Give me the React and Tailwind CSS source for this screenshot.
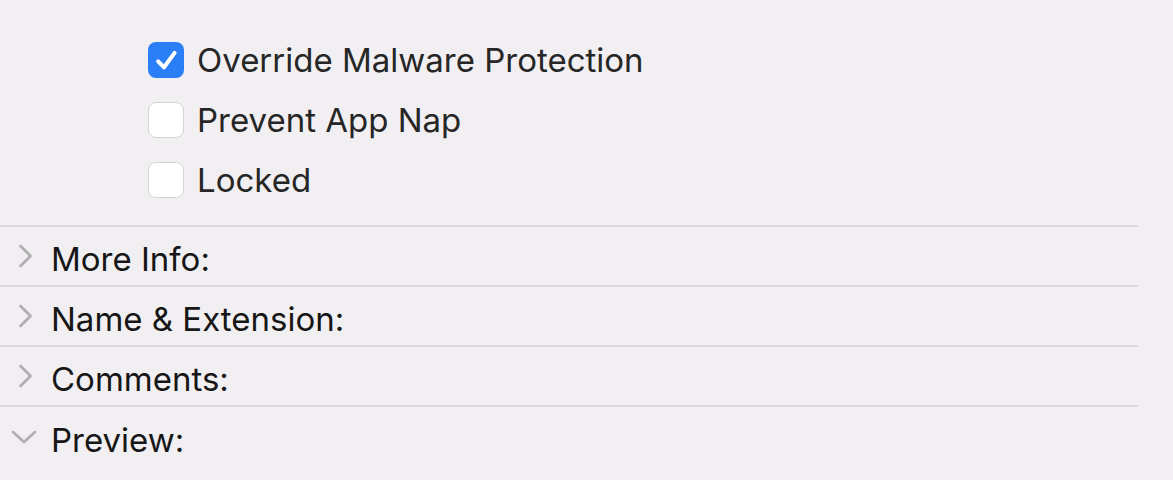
import React from "react";

function Check({ checked }) {
  if (checked) {
    return (
      <div className="w-[36px] h-[36px] rounded-[8px] bg-[#2a7ff6] flex items-center justify-center shrink-0">
        <svg width="27" height="27" viewBox="0 0 24 24" fill="none">
          <path d="M4.6 12.8 L9.8 18 L19.2 5.2" stroke="white" strokeWidth="3.6" strokeLinecap="round" strokeLinejoin="round" />
        </svg>
      </div>
    );
  }
  return (
    <div className="w-[36px] h-[36px] rounded-[8px] bg-white border border-[#d6d3d6] shrink-0" />
  );
}

function Row({ checked, label }) {
  return (
    <div className="h-[60px] flex items-center gap-[13px]">
      <Check checked={checked} />
      <span className="text-[33px] text-[#262626] leading-none">{label}</span>
    </div>
  );
}

function Chevron({ open }) {
  return (
    <div className="w-[51px] flex items-center justify-center shrink-0">
      {open ? (
        <svg width="26" height="15" viewBox="0 0 26 15" fill="none" className="ml-[-4px]">
          <path d="M2 2 L13 12 L24 2" stroke="#b1afb1" strokeWidth="2.8" strokeLinecap="round" strokeLinejoin="round" />
        </svg>
      ) : (
        <svg width="15" height="24" viewBox="0 0 15 24" fill="none" className="ml-[-1px]">
          <path d="M2.5 2 L12.5 12 L2.5 22" stroke="#b1afb1" strokeWidth="2.8" strokeLinecap="round" strokeLinejoin="round" />
        </svg>
      )}
    </div>
  );
}

function Section({ label, open, last }) {
  return (
    <div
      className={
        last
          ? "h-[60px] flex items-center w-[1138px]"
          : "h-[60px] flex items-center border-b-2 border-[#dcd8dc] w-[1138px]"
      }
    >
      <Chevron open={open} />
      <span className="text-[33px] text-[#161616] leading-none pt-[6px]">{label}</span>
    </div>
  );
}

export default function App() {
  return (
    <div
      className="w-[1173px] h-[480px] bg-[#f2eff2] overflow-hidden"
      style={{ fontFamily: '"Inter", "Liberation Sans", sans-serif' }}
    >
      <div className="pt-[30px] pl-[148px] pb-[15px] border-b-2 border-[#dcd8dc] w-[1138px]">
        <Row checked label="Override Malware Protection" />
        <Row label="Prevent App Nap" />
        <Row label="Locked" />
      </div>
      <Section label="More Info:" />
      <Section label="Name & Extension:" />
      <Section label="Comments:" />
      <Section label="Preview:" open last />
    </div>
  );
}
